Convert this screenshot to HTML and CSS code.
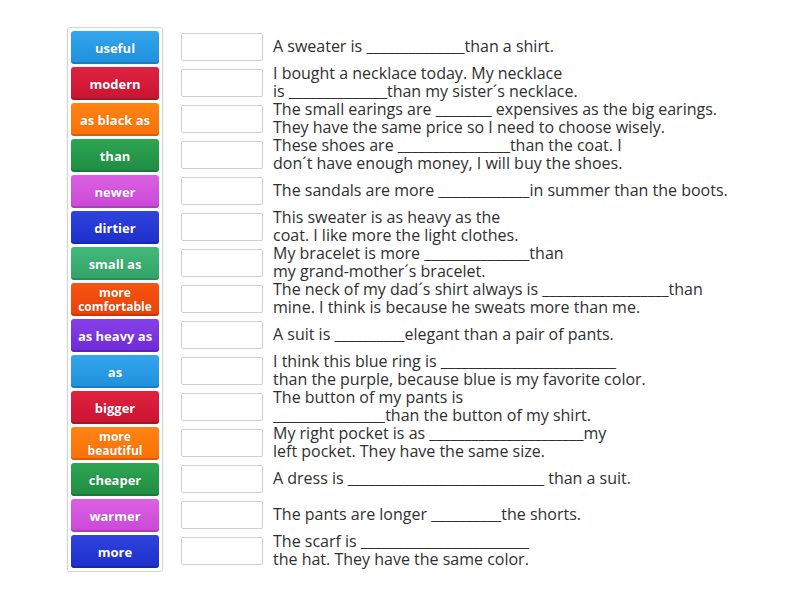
FILE: index.html
```html
<!DOCTYPE html>
<html>
<head>
<meta charset="utf-8">
<link rel="stylesheet" href="styles.css">
</head>
<body>
<div class="page">
  <div class="bank">
    <div class="tile c-blue">useful</div>
    <div class="tile c-red">modern</div>
    <div class="tile c-orange">as black as</div>
    <div class="tile c-green">than</div>
    <div class="tile c-pink">newer</div>
    <div class="tile c-navy">dirtier</div>
    <div class="tile c-teal">small as</div>
    <div class="tile c-redorange two">more<br>comfortable</div>
    <div class="tile c-purple">as heavy as</div>
    <div class="tile c-blue">as</div>
    <div class="tile c-red">bigger</div>
    <div class="tile c-orange two">more<br>beautiful</div>
    <div class="tile c-green">cheaper</div>
    <div class="tile c-pink">warmer</div>
    <div class="tile c-navy">more</div>
  </div>
  <div class="rows">
    <div class="row"><div class="box"></div><div class="text">A sweater is ______________than a shirt.</div></div>
    <div class="row"><div class="box"></div><div class="text">I bought a necklace today. My necklace<br>is ______________than my sister´s necklace.</div></div>
    <div class="row"><div class="box"></div><div class="text">The small earings are ________ expensives as the big earings.<br>They have the same price so I need to choose wisely.</div></div>
    <div class="row"><div class="box"></div><div class="text">These shoes are ________________than the coat. I<br>don´t have enough money, I will buy the shoes.</div></div>
    <div class="row"><div class="box"></div><div class="text">The sandals are more _____________in summer than the boots.</div></div>
    <div class="row"><div class="box"></div><div class="text">This sweater is as heavy as the<br>coat. I like more the light clothes.</div></div>
    <div class="row"><div class="box"></div><div class="text">My bracelet is more _______________than<br>my grand-mother´s bracelet.</div></div>
    <div class="row"><div class="box"></div><div class="text">The neck of my dad´s shirt always is __________________than<br>mine. I think is because he sweats more than me.</div></div>
    <div class="row"><div class="box"></div><div class="text">A suit is __________elegant than a pair of pants.</div></div>
    <div class="row"><div class="box"></div><div class="text">I think this blue ring is _________________________<br>than the purple, because blue is my favorite color.</div></div>
    <div class="row"><div class="box"></div><div class="text">The button of my pants is<br>________________than the button of my shirt.</div></div>
    <div class="row"><div class="box"></div><div class="text">My right pocket is as ______________________my<br>left pocket. They have the same size.</div></div>
    <div class="row"><div class="box"></div><div class="text">A dress is ____________________________ than a suit.</div></div>
    <div class="row"><div class="box"></div><div class="text">The pants are longer __________the shorts.</div></div>
    <div class="row"><div class="box"></div><div class="text">The scarf is ________________________<br>the hat. They have the same color.</div></div>
  </div>
</div>
</body>
</html>
```
FILE: styles.css
```css
html, body {
  margin: 0;
  padding: 0;
  background: #ffffff;
}
.page {
  display: flex;
  align-items: flex-start;
  padding: 27px 0 0 67px;
  font-family: "Open Sans", "Noto Sans", sans-serif;
}
.bank {
  display: flex;
  flex-direction: column;
  gap: 3px;
  padding: 3px;
  border: 1px solid #d4d4d4;
  border-radius: 3px;
  box-shadow: 0 1px 2px rgba(0,0,0,0.12);
}
.tile {
  width: 88px;
  height: 33px;
  box-sizing: border-box;
  border-radius: 3px;
  color: #fff;
  font-weight: 700;
  font-size: 13px;
  display: flex;
  align-items: center;
  justify-content: center;
  text-align: center;
  text-shadow: 0 0 1px rgba(0,0,0,0.2);
  box-shadow: inset 0 -2px 0 rgba(0,0,0,0.15);
}
.tile.two {
  font-size: 12px;
  line-height: 14px;
}
.c-blue { background: linear-gradient(#33a6ec, #1f90dc); }
.c-red { background: linear-gradient(#e0223f, #c81432); }
.c-orange { background: linear-gradient(#ff8414, #f97008); }
.c-green { background: linear-gradient(#2ea653, #1f8c42); }
.c-pink { background: linear-gradient(#dc61e4, #c948d6); }
.c-navy { background: linear-gradient(#2f43dd, #1d2fcc); }
.c-teal { background: linear-gradient(#44b97c, #30a466); }
.c-redorange { background: linear-gradient(#f65412, #e84206); }
.c-purple { background: linear-gradient(#8741e8, #7029d8); }
.rows {
  display: flex;
  flex-direction: column;
  margin-left: 18px;
  padding-top: 2px;
}
.row {
  display: flex;
  align-items: center;
  height: 36px;
}
.box {
  width: 82px;
  height: 28px;
  box-sizing: border-box;
  border: 1px solid #cfcfcf;
  border-radius: 2px;
  background: #fff;
  flex: none;
}
.text {
  margin-left: 10px;
  padding-bottom: 2px;
  font-size: 16px;
  line-height: 18px;
  color: #2f2f2f;
  white-space: nowrap;
}
```
